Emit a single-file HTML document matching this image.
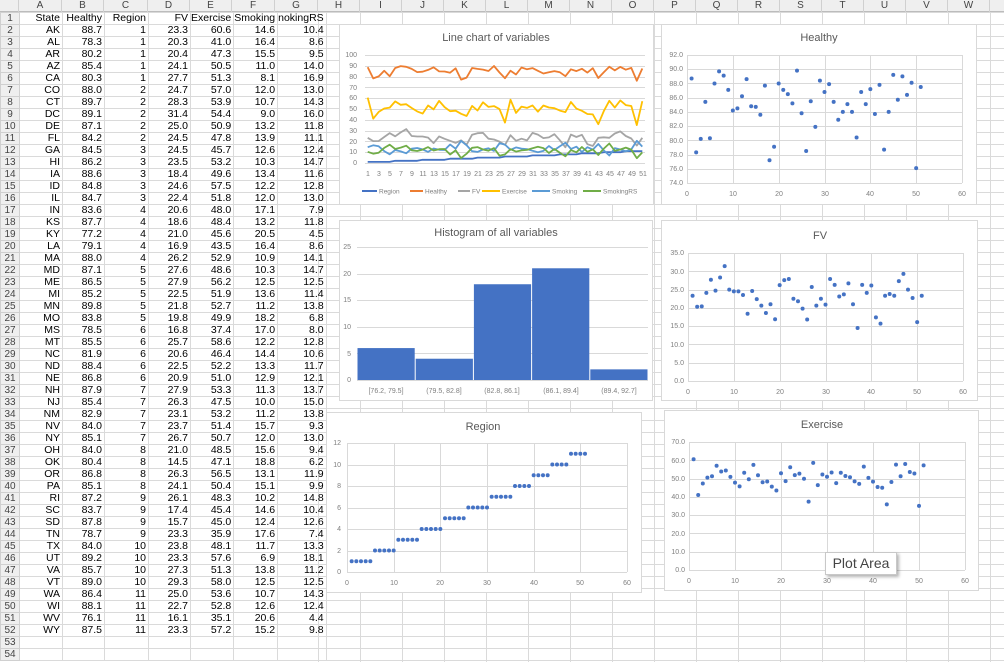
<!DOCTYPE html>
<html><head><meta charset="utf-8">
<style>
*{margin:0;padding:0;box-sizing:border-box}
body{width:1004px;height:662px;overflow:hidden;background:#fff;font-family:"Liberation Sans",Arial,sans-serif;position:relative}
#colhdr{position:absolute;left:0;top:0;width:1004px;height:12px;background:#efefef;border-bottom:1px solid #bcbcbc;font-size:10px;color:#444}
#colhdr span{position:absolute;top:0;line-height:12px;text-align:center;border-right:1px solid #d0d0d0;height:12px}
#grid{position:absolute;left:318px;top:12px;width:686px;height:650px;
background-image:linear-gradient(to right,#dadada 1px,transparent 1px),linear-gradient(to bottom,#dadada 1px,transparent 1px);
background-size:42px 12px;}
table{position:absolute;left:0;top:12px;border-collapse:collapse;table-layout:fixed;font-size:10.5px;color:#000}
td,th{height:12px;line-height:11px;border:1px solid #dadada;padding:0 2px 0 0;text-align:right;white-space:nowrap;overflow:hidden;font-weight:normal}
th{background:#efefef;color:#444;text-align:center;padding:0;border-color:#d0d0d0;font-size:10px}
svg{position:absolute;left:0;top:0}
.t{font-size:11px;fill:#595959;text-anchor:middle}
.a{font-size:7px;fill:#7f7f7f}
.e{text-anchor:end}
.m{text-anchor:middle}
#tip{position:absolute;left:825px;top:552px;width:72px;height:23px;background:#fff;border:1px solid #c8c8c8;box-shadow:2px 2px 3px rgba(0,0,0,.3);font-size:14px;color:#444;line-height:21px;text-align:center}
</style></head><body>
<div id="colhdr">
<span style="left:0;width:19px"></span>
<span style="left:19px;width:43px">A</span>
<span style="left:62px;width:42px">B</span>
<span style="left:104px;width:44px">C</span>
<span style="left:148px;width:42px">D</span>
<span style="left:190px;width:42px">E</span>
<span style="left:232px;width:43px">F</span>
<span style="left:275px;width:43px">G</span>
<span style="left:318px;width:42px">H</span>
<span style="left:360px;width:42px">I</span>
<span style="left:402px;width:42px">J</span>
<span style="left:444px;width:42px">K</span>
<span style="left:486px;width:42px">L</span>
<span style="left:528px;width:42px">M</span>
<span style="left:570px;width:42px">N</span>
<span style="left:612px;width:42px">O</span>
<span style="left:654px;width:42px">P</span>
<span style="left:696px;width:42px">Q</span>
<span style="left:738px;width:42px">R</span>
<span style="left:780px;width:42px">S</span>
<span style="left:822px;width:42px">T</span>
<span style="left:864px;width:42px">U</span>
<span style="left:906px;width:42px">V</span>
<span style="left:948px;width:42px">W</span>
</div>
<div id="grid"></div>
<table>
<colgroup><col style="width:19px"><col style="width:43px"><col style="width:42px"><col style="width:44px"><col style="width:42px"><col style="width:42px"><col style="width:43px"><col style="width:43px"></colgroup>
<tr><th>1</th><td>State</td><td>Healthy</td><td>Region</td><td>FV</td><td>Exercise</td><td>Smoking</td><td>nokingRS</td></tr>
<tr><th>2</th><td>AK</td><td>88.7</td><td>1</td><td>23.3</td><td>60.6</td><td>14.6</td><td>10.4</td></tr>
<tr><th>3</th><td>AL</td><td>78.3</td><td>1</td><td>20.3</td><td>41.0</td><td>16.4</td><td>8.6</td></tr>
<tr><th>4</th><td>AR</td><td>80.2</td><td>1</td><td>20.4</td><td>47.3</td><td>15.5</td><td>9.5</td></tr>
<tr><th>5</th><td>AZ</td><td>85.4</td><td>1</td><td>24.1</td><td>50.5</td><td>11.0</td><td>14.0</td></tr>
<tr><th>6</th><td>CA</td><td>80.3</td><td>1</td><td>27.7</td><td>51.3</td><td>8.1</td><td>16.9</td></tr>
<tr><th>7</th><td>CO</td><td>88.0</td><td>2</td><td>24.7</td><td>57.0</td><td>12.0</td><td>13.0</td></tr>
<tr><th>8</th><td>CT</td><td>89.7</td><td>2</td><td>28.3</td><td>53.9</td><td>10.7</td><td>14.3</td></tr>
<tr><th>9</th><td>DC</td><td>89.1</td><td>2</td><td>31.4</td><td>54.4</td><td>9.0</td><td>16.0</td></tr>
<tr><th>10</th><td>DE</td><td>87.1</td><td>2</td><td>25.0</td><td>50.9</td><td>13.2</td><td>11.8</td></tr>
<tr><th>11</th><td>FL</td><td>84.2</td><td>2</td><td>24.5</td><td>47.8</td><td>13.9</td><td>11.1</td></tr>
<tr><th>12</th><td>GA</td><td>84.5</td><td>3</td><td>24.5</td><td>45.7</td><td>12.6</td><td>12.4</td></tr>
<tr><th>13</th><td>HI</td><td>86.2</td><td>3</td><td>23.5</td><td>53.2</td><td>10.3</td><td>14.7</td></tr>
<tr><th>14</th><td>IA</td><td>88.6</td><td>3</td><td>18.4</td><td>49.6</td><td>13.4</td><td>11.6</td></tr>
<tr><th>15</th><td>ID</td><td>84.8</td><td>3</td><td>24.6</td><td>57.5</td><td>12.2</td><td>12.8</td></tr>
<tr><th>16</th><td>IL</td><td>84.7</td><td>3</td><td>22.4</td><td>51.8</td><td>12.0</td><td>13.0</td></tr>
<tr><th>17</th><td>IN</td><td>83.6</td><td>4</td><td>20.6</td><td>48.0</td><td>17.1</td><td>7.9</td></tr>
<tr><th>18</th><td>KS</td><td>87.7</td><td>4</td><td>18.6</td><td>48.4</td><td>13.2</td><td>11.8</td></tr>
<tr><th>19</th><td>KY</td><td>77.2</td><td>4</td><td>21.0</td><td>45.6</td><td>20.5</td><td>4.5</td></tr>
<tr><th>20</th><td>LA</td><td>79.1</td><td>4</td><td>16.9</td><td>43.5</td><td>16.4</td><td>8.6</td></tr>
<tr><th>21</th><td>MA</td><td>88.0</td><td>4</td><td>26.2</td><td>52.9</td><td>10.9</td><td>14.1</td></tr>
<tr><th>22</th><td>MD</td><td>87.1</td><td>5</td><td>27.6</td><td>48.6</td><td>10.3</td><td>14.7</td></tr>
<tr><th>23</th><td>ME</td><td>86.5</td><td>5</td><td>27.9</td><td>56.2</td><td>12.5</td><td>12.5</td></tr>
<tr><th>24</th><td>MI</td><td>85.2</td><td>5</td><td>22.5</td><td>51.9</td><td>13.6</td><td>11.4</td></tr>
<tr><th>25</th><td>MN</td><td>89.8</td><td>5</td><td>21.8</td><td>52.7</td><td>11.2</td><td>13.8</td></tr>
<tr><th>26</th><td>MO</td><td>83.8</td><td>5</td><td>19.8</td><td>49.9</td><td>18.2</td><td>6.8</td></tr>
<tr><th>27</th><td>MS</td><td>78.5</td><td>6</td><td>16.8</td><td>37.4</td><td>17.0</td><td>8.0</td></tr>
<tr><th>28</th><td>MT</td><td>85.5</td><td>6</td><td>25.7</td><td>58.6</td><td>12.2</td><td>12.8</td></tr>
<tr><th>29</th><td>NC</td><td>81.9</td><td>6</td><td>20.6</td><td>46.4</td><td>14.4</td><td>10.6</td></tr>
<tr><th>30</th><td>ND</td><td>88.4</td><td>6</td><td>22.5</td><td>52.2</td><td>13.3</td><td>11.7</td></tr>
<tr><th>31</th><td>NE</td><td>86.8</td><td>6</td><td>20.9</td><td>51.0</td><td>12.9</td><td>12.1</td></tr>
<tr><th>32</th><td>NH</td><td>87.9</td><td>7</td><td>27.9</td><td>53.3</td><td>11.3</td><td>13.7</td></tr>
<tr><th>33</th><td>NJ</td><td>85.4</td><td>7</td><td>26.3</td><td>47.5</td><td>10.0</td><td>15.0</td></tr>
<tr><th>34</th><td>NM</td><td>82.9</td><td>7</td><td>23.1</td><td>53.2</td><td>11.2</td><td>13.8</td></tr>
<tr><th>35</th><td>NV</td><td>84.0</td><td>7</td><td>23.7</td><td>51.4</td><td>15.7</td><td>9.3</td></tr>
<tr><th>36</th><td>NY</td><td>85.1</td><td>7</td><td>26.7</td><td>50.7</td><td>12.0</td><td>13.0</td></tr>
<tr><th>37</th><td>OH</td><td>84.0</td><td>8</td><td>21.0</td><td>48.5</td><td>15.6</td><td>9.4</td></tr>
<tr><th>38</th><td>OK</td><td>80.4</td><td>8</td><td>14.5</td><td>47.1</td><td>18.8</td><td>6.2</td></tr>
<tr><th>39</th><td>OR</td><td>86.8</td><td>8</td><td>26.3</td><td>56.5</td><td>13.1</td><td>11.9</td></tr>
<tr><th>40</th><td>PA</td><td>85.1</td><td>8</td><td>24.1</td><td>50.4</td><td>15.1</td><td>9.9</td></tr>
<tr><th>41</th><td>RI</td><td>87.2</td><td>9</td><td>26.1</td><td>48.3</td><td>10.2</td><td>14.8</td></tr>
<tr><th>42</th><td>SC</td><td>83.7</td><td>9</td><td>17.4</td><td>45.4</td><td>14.6</td><td>10.4</td></tr>
<tr><th>43</th><td>SD</td><td>87.8</td><td>9</td><td>15.7</td><td>45.0</td><td>12.4</td><td>12.6</td></tr>
<tr><th>44</th><td>TN</td><td>78.7</td><td>9</td><td>23.3</td><td>35.9</td><td>17.6</td><td>7.4</td></tr>
<tr><th>45</th><td>TX</td><td>84.0</td><td>10</td><td>23.8</td><td>48.1</td><td>11.7</td><td>13.3</td></tr>
<tr><th>46</th><td>UT</td><td>89.2</td><td>10</td><td>23.3</td><td>57.6</td><td>6.9</td><td>18.1</td></tr>
<tr><th>47</th><td>VA</td><td>85.7</td><td>10</td><td>27.3</td><td>51.3</td><td>13.8</td><td>11.2</td></tr>
<tr><th>48</th><td>VT</td><td>89.0</td><td>10</td><td>29.3</td><td>58.0</td><td>12.5</td><td>12.5</td></tr>
<tr><th>49</th><td>WA</td><td>86.4</td><td>11</td><td>25.0</td><td>53.6</td><td>10.7</td><td>14.3</td></tr>
<tr><th>50</th><td>WI</td><td>88.1</td><td>11</td><td>22.7</td><td>52.8</td><td>12.6</td><td>12.4</td></tr>
<tr><th>51</th><td>WV</td><td>76.1</td><td>11</td><td>16.1</td><td>35.1</td><td>20.6</td><td>4.4</td></tr>
<tr><th>52</th><td>WY</td><td>87.5</td><td>11</td><td>23.3</td><td>57.2</td><td>15.2</td><td>9.8</td></tr>
<tr><th>53</th><td></td><td></td><td></td><td></td><td></td><td></td><td></td></tr>
<tr><th>54</th><td></td><td></td><td></td><td></td><td></td><td></td><td></td></tr>
</table>

<svg id="s" width="1004" height="662" viewBox="0 0 1004 662">
<g fill="#fff" stroke="#d9d9d9">
<rect x="339.5" y="24.5" width="314" height="180"/>
<rect x="661.5" y="24.5" width="315" height="180"/>
<rect x="339.5" y="220.5" width="313" height="180"/>
<rect x="661.5" y="220.5" width="316" height="180"/>
<rect x="326.5" y="412.5" width="315" height="180"/>
<rect x="664.5" y="410.5" width="314" height="180"/>
</g>
<g id="gl" stroke="#d9d9d9" stroke-width="1"></g>
<g id="dt"></g>
<text class="t" x="496" y="41">Line chart of variables</text>
<text class="t" x="819" y="41">Healthy</text>
<text class="t" x="496" y="236">Histogram of all variables</text>
<text class="t" x="820" y="239">FV</text>
<text class="t" x="483" y="430">Region</text>
<text class="t" x="822" y="428">Exercise</text>

<g class="a e" text-anchor="end">
<text x="357" y="57">100</text><text x="357" y="68">90</text><text x="357" y="79">80</text><text x="357" y="90">70</text><text x="357" y="100">60</text><text x="357" y="111">50</text><text x="357" y="122">40</text><text x="357" y="133">30</text><text x="357" y="144">20</text><text x="357" y="154">10</text><text x="357" y="165">0</text>

<text x="683" y="57">92.0</text><text x="683" y="71">90.0</text><text x="683" y="86">88.0</text><text x="683" y="100">86.0</text><text x="683" y="114">84.0</text><text x="683" y="128">82.0</text><text x="683" y="143">80.0</text><text x="683" y="157">78.0</text><text x="683" y="171">76.0</text><text x="683" y="185">74.0</text>

<text x="351" y="249">25</text><text x="351" y="276">20</text><text x="351" y="302">15</text><text x="351" y="329">10</text><text x="351" y="356">5</text><text x="351" y="382">0</text>

<text x="684" y="255">35.0</text><text x="684" y="274">30.0</text><text x="684" y="292">25.0</text><text x="684" y="310">20.0</text><text x="684" y="328">15.0</text><text x="684" y="347">10.0</text><text x="684" y="365">5.0</text><text x="684" y="383">0.0</text>

<text x="341" y="445">12</text><text x="341" y="467">10</text><text x="341" y="488">8</text><text x="341" y="510">6</text><text x="341" y="531">4</text><text x="341" y="553">2</text><text x="341" y="574">0</text>

<text x="685" y="444">70.0</text><text x="685" y="463">60.0</text><text x="685" y="481">50.0</text><text x="685" y="499">40.0</text><text x="685" y="517">30.0</text><text x="685" y="536">20.0</text><text x="685" y="554">10.0</text><text x="685" y="572">0.0</text>
</g>

<g class="a" text-anchor="middle">
<text x="368" y="176">1</text><text x="379" y="176">3</text><text x="390" y="176">5</text><text x="401" y="176">7</text><text x="412" y="176">9</text><text x="423" y="176">11</text><text x="434" y="176">13</text><text x="445" y="176">15</text><text x="456" y="176">17</text><text x="467" y="176">19</text><text x="478" y="176">21</text><text x="489" y="176">23</text><text x="500" y="176">25</text><text x="511" y="176">27</text><text x="522" y="176">29</text><text x="533" y="176">31</text><text x="544" y="176">33</text><text x="555" y="176">35</text><text x="566" y="176">37</text><text x="577" y="176">39</text><text x="588" y="176">41</text><text x="599" y="176">43</text><text x="610" y="176">45</text><text x="621" y="176">47</text><text x="632" y="176">49</text><text x="643" y="176">51</text>

<text x="687" y="196">0</text><text x="733" y="196">10</text><text x="779" y="196">20</text><text x="825" y="196">30</text><text x="870" y="196">40</text><text x="916" y="196">50</text><text x="962" y="196">60</text>

<text x="386" y="393">[76.2, 79.5]</text><text x="444" y="393">(79.5, 82.8]</text><text x="502" y="393">(82.8, 86.1]</text><text x="561" y="393">(86.1, 89.4]</text><text x="619" y="393">(89.4, 92.7]</text>

<text x="688" y="394">0</text><text x="734" y="394">10</text><text x="780" y="394">20</text><text x="826" y="394">30</text><text x="871" y="394">40</text><text x="917" y="394">50</text><text x="963" y="394">60</text>

<text x="347" y="585">0</text><text x="394" y="585">10</text><text x="440" y="585">20</text><text x="487" y="585">30</text><text x="534" y="585">40</text><text x="580" y="585">50</text><text x="627" y="585">60</text>

<text x="689" y="583">0</text><text x="735" y="583">10</text><text x="781" y="583">20</text><text x="827" y="583">30</text><text x="873" y="583">40</text><text x="919" y="583">50</text><text x="965" y="583">60</text>
</g>

<g stroke-width="2">
<line x1="362" y1="191" x2="377" y2="191" stroke="#4472c4"/>
<line x1="410" y1="191" x2="423" y2="191" stroke="#ed7d31"/>
<line x1="458" y1="191" x2="470" y2="191" stroke="#a5a5a5"/>
<line x1="482" y1="191" x2="500" y2="191" stroke="#ffc000"/>
<line x1="532" y1="191" x2="550" y2="191" stroke="#5b9bd5"/>
<line x1="583" y1="191" x2="601" y2="191" stroke="#70ad47"/>
</g>
<g class="a" style="font-size:6.5px">
<text x="379" y="193.5">Region</text><text x="425" y="193.5">Healthy</text><text x="472" y="193.5">FV</text><text x="502" y="193.5">Exercise</text><text x="552" y="193.5">Smoking</text><text x="603" y="193.5">SmokingRS</text>
</g>
</svg>
<div id="tip">Plot Area</div>

<script>
var H=[88.7,78.3,80.2,85.4,80.3,88.0,89.7,89.1,87.1,84.2,84.5,86.2,88.6,84.8,84.7,83.6,87.7,77.2,79.1,88.0,87.1,86.5,85.2,89.8,83.8,78.5,85.5,81.9,88.4,86.8,87.9,85.4,82.9,84.0,85.1,84.0,80.4,86.8,85.1,87.2,83.7,87.8,78.7,84.0,89.2,85.7,89.0,86.4,88.1,76.1,87.5];
var R=[1,1,1,1,1,2,2,2,2,2,3,3,3,3,3,4,4,4,4,4,5,5,5,5,5,6,6,6,6,6,7,7,7,7,7,8,8,8,8,9,9,9,9,10,10,10,10,11,11,11,11];
var FV=[23.3,20.3,20.4,24.1,27.7,24.7,28.3,31.4,25.0,24.5,24.5,23.5,18.4,24.6,22.4,20.6,18.6,21.0,16.9,26.2,27.6,27.9,22.5,21.8,19.8,16.8,25.7,20.6,22.5,20.9,27.9,26.3,23.1,23.7,26.7,21.0,14.5,26.3,24.1,26.1,17.4,15.7,23.3,23.8,23.3,27.3,29.3,25.0,22.7,16.1,23.3];
var EX=[60.6,41.0,47.3,50.5,51.3,57.0,53.9,54.4,50.9,47.8,45.7,53.2,49.6,57.5,51.8,48.0,48.4,45.6,43.5,52.9,48.6,56.2,51.9,52.7,49.9,37.4,58.6,46.4,52.2,51.0,53.3,47.5,53.2,51.4,50.7,48.5,47.1,56.5,50.4,48.3,45.4,45.0,35.9,48.1,57.6,51.3,58.0,53.6,52.8,35.1,57.2];
var SM=[14.6,16.4,15.5,11.0,8.1,12.0,10.7,9.0,13.2,13.9,12.6,10.3,13.4,12.2,12.0,17.1,13.2,20.5,16.4,10.9,10.3,12.5,13.6,11.2,18.2,17.0,12.2,14.4,13.3,12.9,11.3,10.0,11.2,15.7,12.0,15.6,18.8,13.1,15.1,10.2,14.6,12.4,17.6,11.7,6.9,13.8,12.5,10.7,12.6,20.6,15.2];
var RS=[10.4,8.6,9.5,14.0,16.9,13.0,14.3,16.0,11.8,11.1,12.4,14.7,11.6,12.8,13.0,7.9,11.8,4.5,8.6,14.1,14.7,12.5,11.4,13.8,6.8,8.0,12.8,10.6,11.7,12.1,13.7,15.0,13.8,9.3,13.0,9.4,6.2,11.9,9.9,14.8,10.4,12.6,7.4,13.3,18.1,11.2,12.5,14.3,12.4,4.4,9.8];
var NS="http://www.w3.org/2000/svg",gl=document.getElementById("gl"),dt=document.getElementById("dt");
function el(p,n,a){var e=document.createElementNS(NS,n);for(var k in a)e.setAttribute(k,a[k]);p.appendChild(e);return e;}
function hl(x0,x1,y){el(gl,"line",{x1:x0,x2:x1,y1:Math.round(y)+.5,y2:Math.round(y)+.5});}
function vl(x,y0,y1){el(gl,"line",{x1:Math.round(x)+.5,x2:Math.round(x)+.5,y1:y0,y2:y1});}
function scatter(x0,x1,yt,yb,ymin,ymax,n,d){
 for(var i=0;i<=n;i++)hl(x0,x1,yt+(yb-yt)*i/n);
 for(var j=0;j<=6;j++)vl(x0+(x1-x0)*j/6,yt,yb);
 for(var k=0;k<d.length;k++){
  el(dt,"circle",{cx:x0+(x1-x0)*(k+1)/60,cy:yb-(d[k]-ymin)/(ymax-ymin)*(yb-yt),r:2,fill:"#4472c4"});
 }
}
scatter(687,962,55,183,74,92,9,H);
scatter(688,963,253,381,0,35,7,FV);
scatter(347,627,443,572,0,12,6,R);
scatter(689,965,442,570,0,70,7,EX);
// line chart
for(var i=0;i<=10;i++)hl(365,645,55+10.8*i);
function line(d,c){var p=[];for(var k=0;k<d.length;k++)p.push((365+(k+.5)*280/51).toFixed(1)+","+(163-d[k]*1.08).toFixed(1));
 el(dt,"polyline",{points:p.join(" "),fill:"none",stroke:c,"stroke-width":1.8,"stroke-linejoin":"round"});}
line(R,"#4472c4");line(H,"#ed7d31");line(FV,"#a5a5a5");line(EX,"#ffc000");line(SM,"#5b9bd5");line(RS,"#70ad47");
// histogram
for(var i=0;i<=5;i++)hl(357,648,247+26.6*i);
var hv=[6,4,18,21,2],bw=58.2;
for(var b=0;b<5;b++){var h=hv[b]*133/25;el(dt,"rect",{x:357+bw*b+0.5,y:380-h,width:bw-1,height:h,fill:"#4472c4"});}
</script>
</body></html>
